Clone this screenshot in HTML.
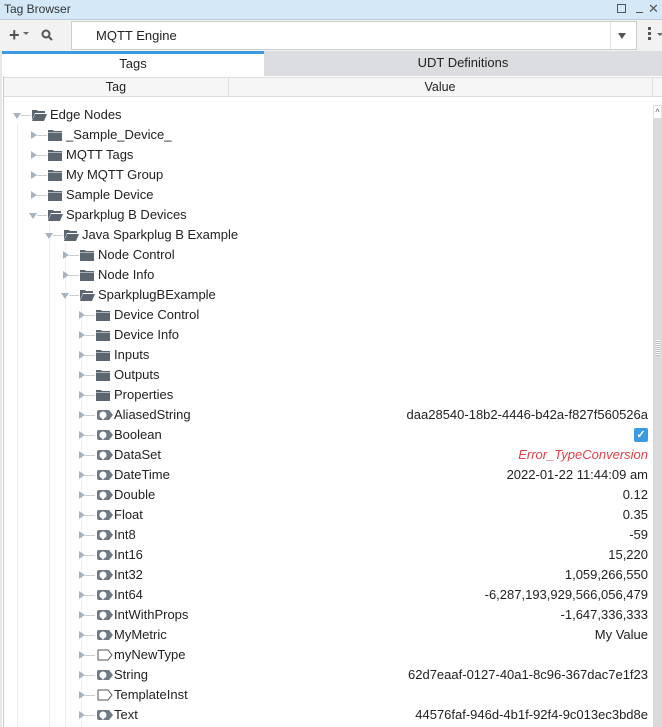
<!DOCTYPE html><html><head><meta charset="utf-8"><style>
*{margin:0;padding:0;box-sizing:border-box}
body{width:662px;height:727px;overflow:hidden;background:#fff;font-family:"Liberation Sans",sans-serif;font-size:13px;color:#222;position:relative}
.a{position:absolute}
.r{position:absolute;height:20px;line-height:20px;white-space:nowrap}
.tri{position:absolute;top:6px;width:0;height:0;border-top:4px solid transparent;border-bottom:4px solid transparent;border-left:6px solid #a9b3bf}
.trd{position:absolute;top:8px;width:0;height:0;border-left:4px solid transparent;border-right:4px solid transparent;border-top:6px solid #a9b3bf}
.dash{position:absolute;top:10px;height:1px;background:#ccc}
.ic{position:absolute;top:3px}
.v{position:absolute;right:4px;height:20px;line-height:20px;text-align:right;white-space:nowrap}
</style></head><body>
<div class="a" style="left:0;top:0;width:662px;height:20px;background:#d4e8f8;border-bottom:1px solid #bcd;font-size:12px;line-height:19px;padding-left:4px;color:#333">Tag Browser</div>
<div class="a" style="left:617px;top:4px;width:9px;height:9px;border:1px solid #555"></div>
<div class="a" style="left:636px;top:12px;width:7px;height:1px;background:#555"></div>
<div class="a" style="left:648px;top:1px;font-size:13px;color:#555">✕</div>
<div class="a" style="left:0;top:20px;width:662px;height:31px;background:#f2f2f2"></div>
<div class="a" style="left:9px;top:26px;font-size:18px;font-weight:bold;color:#555;line-height:18px">+</div>
<div class="a" style="left:23px;top:32px;border-left:3px solid transparent;border-right:3px solid transparent;border-top:3px solid #666"></div>
<svg class="a" style="left:41px;top:29px" width="13" height="13"><circle cx="5" cy="5" r="3.5" fill="none" stroke="#555" stroke-width="2"/><line x1="8" y1="8" x2="11" y2="11" stroke="#555" stroke-width="2"/></svg>
<svg class="a" style="left:69px;top:28px" width="14" height="14"><path d="M11 5A5 5 0 0 0 3 4M3 9a5 5 0 0 0 8 1" fill="none" stroke="#666" stroke-width="1.8"/><path d="M2 1v4h4z M12 13V9H8z" fill="#666"/></svg>
<div class="a" style="left:71px;top:21px;width:566px;height:29px;background:#fff;border:1px solid #ccc"></div>
<div class="a" style="left:96px;top:28px;font-size:13px">MQTT Engine</div>
<div class="a" style="left:618px;top:33px;border-left:4px solid transparent;border-right:4px solid transparent;border-top:6px solid #555"></div>
<div class="a" style="left:610px;top:22px;width:1px;height:27px;background:#e4e4e4"></div>
<div class="a" style="left:648px;top:27px;width:3px;height:3px;background:#555;box-shadow:0 5px 0 #555,0 10px 0 #555"></div>
<div class="a" style="left:657px;top:33px;border-left:3px solid transparent;border-right:3px solid transparent;border-top:3px solid #666"></div>
<div class="a" style="left:2px;top:51px;width:262px;height:3px;background:#3c9ae0"></div>
<div class="a" style="left:2px;top:54px;width:262px;height:22px;background:#fff;text-align:center;line-height:20px">Tags</div>
<div class="a" style="left:264px;top:51px;width:398px;height:25px;background:#dcdde0;text-align:center;line-height:24px">UDT Definitions</div>
<div class="a" style="left:0;top:51px;width:2px;height:676px;background:#e8e8e8"></div>
<div class="a" style="left:3px;top:76px;width:1px;height:651px;background:#ccc"></div>
<div class="a" style="left:4px;top:77px;width:658px;height:20px;background:#f6f6f6;border-top:1px solid #ddd;border-bottom:1px solid #ddd"></div>
<div class="a" style="left:4px;top:78px;width:224px;text-align:center;line-height:19px;font-size:12.5px">Tag</div>
<div class="a" style="left:228px;top:78px;width:424px;text-align:center;line-height:19px;font-size:12.5px">Value</div>
<div class="a" style="left:228px;top:77px;width:1px;height:20px;background:#ddd"></div>
<div class="a" style="left:652px;top:77px;width:1px;height:20px;background:#ddd"></div>
<div class="a" style="left:653px;top:105px;width:9px;height:622px;background:#dadada"></div>
<div class="a" style="left:653px;top:105px;width:9px;height:14px;background:#fff;border:1px solid #ddd;font-size:9px;line-height:12px;color:#555;text-align:center">^</div>
<div class="a" style="left:656px;top:340px;width:4px;height:16px;background:repeating-linear-gradient(#fff 0 1px,#bbb 1px 2px)"></div>
<div class="a" style="left:17px;top:124px;width:1px;height:603px;border-left:1px solid #eee"></div>
<div class="a" style="left:49px;top:224px;width:1px;height:503px;border-left:1px solid #eee"></div>
<div class="a" style="left:65px;top:244px;width:1px;height:483px;border-left:1px solid #eee"></div>
<div class="a" style="left:81px;top:304px;width:1px;height:423px;border-left:1px solid #eee"></div>
<div id="t"></div>
<svg width="0" height="0" style="position:absolute"><defs>
<symbol id="fc" viewBox="0 0 16 14"><path d="M1 2h5l1 1h8v10H1z" fill="#5c6670"/><rect x="1" y="4" width="14" height="1" fill="#fff" opacity=".5"/></symbol>
<symbol id="fo" viewBox="0 0 16 14"><path d="M1 2h5l1 1h7v2H4L1 12z" fill="#5c6670"/><path d="M4 6h12l-3 7H1z" fill="#5c6670"/></symbol>
<symbol id="tg" viewBox="0 0 18 14"><path d="M3 2h10l4 5-4 5H3a2 2 0 0 1-2-2V4a2 2 0 0 1 2-2z" fill="#6f7a84"/><circle cx="7" cy="7" r="3.5" fill="#fff"/><path d="M5 9l2 3 2-3z" fill="#fff"/></symbol>
<symbol id="tu" viewBox="0 0 18 14"><path d="M2 2h10l4 5-4 5H2z" fill="none" stroke="#555" stroke-width="1"/></symbol>
</defs></svg>
<script>
var rows=[[0,'o','d','Edge Nodes'],[1,'c','r','_Sample_Device_'],[1,'c','r','MQTT Tags'],[1,'c','r','My MQTT Group'],[1,'c','r','Sample Device'],[1,'o','d','Sparkplug B Devices'],[2,'o','d','Java Sparkplug B Example'],[3,'c','r','Node Control'],[3,'c','r','Node Info'],[3,'o','d','SparkplugBExample'],[4,'c','r','Device Control'],[4,'c','r','Device Info'],[4,'c','r','Inputs'],[4,'c','r','Outputs'],[4,'c','r','Properties'],
[4,'t','r','AliasedString','daa28540-18b2-4446-b42a-f827f560526a'],[4,'t','r','Boolean','CHK'],[4,'t','r','DataSet','ERR'],[4,'t','r','DateTime','2022-01-22 11:44:09 am'],[4,'t','r','Double','0.12'],[4,'t','r','Float','0.35'],[4,'t','r','Int8','-59'],[4,'t','r','Int16','15,220'],[4,'t','r','Int32','1,059,266,550'],[4,'t','r','Int64','-6,287,193,929,566,056,479'],[4,'t','r','IntWithProps','-1,647,336,333'],[4,'t','r','MyMetric','My Value'],[4,'u','r','myNewType',''],[4,'t','r','String','62d7eaaf-0127-40a1-8c96-367dac7e1f23'],[4,'u','r','TemplateInst',''],[4,'t','r','Text','44576faf-946d-4b1f-92f4-9c013ec3bd8e']];
var h='';
rows.forEach(function(r,i){var y=105+i*20,L=r[0],x=13+16*L;
h+='<div class="r" style="left:0;top:'+y+'px;width:652px">';
h+='<div class="'+(r[2]=='d'?'trd':'tri')+'" style="left:'+(r[2]=='d'?x:x+2)+'px"></div>';
h+='<div class="dash" style="left:'+(x+8)+'px;width:10px"></div>';
var id={o:'fo',c:'fc',t:'tg',u:'tu'}[r[1]];
h+='<svg class="ic" style="left:'+(x+(r[1]=='t'||r[1]=='u'?19:18))+'px" width="'+(r[1]=='t'||r[1]=='u'?18:16)+'" height="14"><use href="#'+id+'"/></svg>';
h+='<span style="position:absolute;left:'+(x+37)+'px">'+r[3]+'</span>';
if(r[4]){if(r[4]=='CHK')h+='<div class="a" style="right:4px;top:3px;width:14px;height:14px;background:#3c9ae0;border-radius:2px;color:#fff;font-size:11px;line-height:14px;text-align:center;font-weight:bold">✓</div>';
else if(r[4]=='ERR')h+='<div class="v" style="color:#e0404a;font-style:italic">Error_TypeConversion</div>';
else h+='<div class="v">'+r[4]+'</div>';}
h+='</div>';});
document.getElementById('t').innerHTML=h;
</script>
</body></html>
